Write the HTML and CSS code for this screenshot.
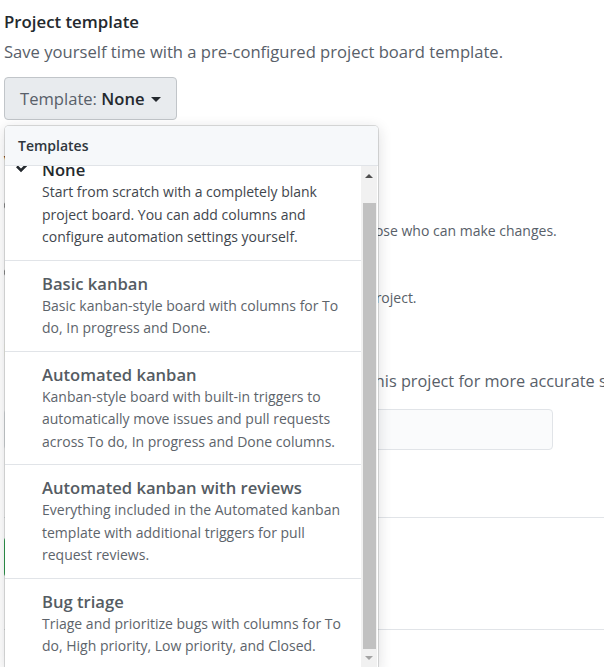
FILE: index.html
```html
<!DOCTYPE html>
<html lang="en">
<head>
<meta charset="utf-8">
<title>Project template</title>
<link rel="stylesheet" href="styles.css">
</head>
<body>
<div class="page">
  <section class="template">
    <h3 class="heading">Project template</h3>
    <p class="note">Save yourself time with a pre-configured project board template.</p>
    <div class="picker">
      <button class="btn" type="button"><span class="btn-label">Template:</span>&nbsp;<span class="btn-value">None</span><span class="caret"></span></button>
      <div class="menu">
        <div class="menu-header">Templates</div>
        <div class="menu-body">
          <div class="menu-list">
            <div class="menu-scroll">
              <div class="item selected">
                <span class="item-icon"><svg width="15" height="20" viewBox="0 0 12 16"><path d="M12 5l-8 8-4-4 1.5-1.5L4 10l6.5-6.5L12 5z"/></svg></span>
                <div class="item-text">
                  <div class="item-title">None</div>
                  <div class="item-desc">Start from scratch with a completely blank<br>project board. You can add columns and<br>configure automation settings yourself.</div>
                </div>
              </div>
              <div class="item">
                <span class="item-icon"></span>
                <div class="item-text">
                  <div class="item-title">Basic kanban</div>
                  <div class="item-desc">Basic kanban-style board with columns for To<br>do, In progress and Done.</div>
                </div>
              </div>
              <div class="item">
                <span class="item-icon"></span>
                <div class="item-text">
                  <div class="item-title">Automated kanban</div>
                  <div class="item-desc">Kanban-style board with built-in triggers to<br>automatically move issues and pull requests<br>across To do, In progress and Done columns.</div>
                </div>
              </div>
              <div class="item">
                <span class="item-icon"></span>
                <div class="item-text">
                  <div class="item-title">Automated kanban with reviews</div>
                  <div class="item-desc">Everything included in the Automated kanban<br>template with additional triggers for pull<br>request reviews.</div>
                </div>
              </div>
              <div class="item">
                <span class="item-icon"></span>
                <div class="item-text">
                  <div class="item-title">Bug triage</div>
                  <div class="item-desc">Triage and prioritize bugs with columns for To<br>do, High priority, Low priority, and Closed.</div>
                </div>
              </div>
            </div>
          </div>
          <div class="scrollbar">
            <div class="sb-btn"><span class="arrow-up"></span></div>
            <div class="sb-gap"></div>
            <div class="sb-thumb"></div>
            <div class="sb-btn sb-btn-end"><span class="arrow-down"></span></div>
          </div>
        </div>
      </div>
    </div>
  </section>

  <section class="visibility">
    <h3 class="sub-heading">Visibility</h3>
    <label class="radio-row"><span class="radio"></span><span class="radio-label">Public</span></label>
    <p class="radio-note public-note">Anyone on the internet can see this project. You choose who can make changes.</p>
    <label class="radio-row private-row"><span class="radio"></span><span class="radio-label">Private</span></label>
    <p class="radio-note private-note">You choose who can see and make changes to this project.</p>
  </section>

  <section class="linked">
    <h3 class="sub-heading linked-heading">Linked repositories</h3>
    <p class="linked-note">Search by name to link up to 25 repositories to this project for more accurate suggestions and better search results.</p>
    <div class="search-input"></div>
  </section>

  <hr class="rule">
  <div class="create-btn">Create project</div>
  <hr class="rule rule-last">
</div>
</body>
</html>
```

FILE: styles.css
```css
html, body {
  margin: 0;
  padding: 0;
  background: #ffffff;
  overflow: hidden;
}

body {
  width: 604px;
  height: 667px;
  font-family: "Open Sans", "Noto Sans", sans-serif;
  color: #24292e;
}

.page {
  padding-left: 4px;
}

.heading {
  margin: 0;
  padding-top: 10px;
  font-size: 16.8px;
  line-height: 24px;
  font-weight: 600;
  color: #24292e;
}

.note {
  margin: 4px 0 0;
  font-size: 16.6px;
  line-height: 28px;
  color: #586069;
  white-space: nowrap;
}

.picker {
  position: relative;
  margin-top: 11px;
}

.btn {
  display: inline-flex;
  align-items: center;
  height: 43px;
  box-sizing: border-box;
  padding: 0 15px;
  border: 1px solid #c1c5c9;
  border-radius: 4px;
  background: #e8ebee;
  font-family: inherit;
  font-size: 16.6px;
  line-height: 24px;
  color: #586069;
}

.btn-value {
  color: #24292e;
  font-weight: 600;
}

.caret {
  display: inline-block;
  width: 0;
  height: 0;
  margin-left: 6px;
  margin-top: 2px;
  border-top: 5px solid #24292e;
  border-left: 5px solid transparent;
  border-right: 5px solid transparent;
}

.menu {
  position: absolute;
  top: 48px;
  left: 0;
  z-index: 10;
  width: 375px;
  box-sizing: border-box;
  border: 1px solid rgba(27, 31, 35, 0.15);
  border-radius: 5px 5px 0 0;
  background: #ffffff;
  background-clip: padding-box;
  box-shadow: 0 3px 14px rgba(27, 31, 35, 0.14);
  overflow: hidden;
}

.menu-header {
  padding: 8px 13px;
  font-size: 14px;
  line-height: 23px;
  font-weight: 600;
  color: #2f363d;
  background: #f6f8fa;
  border-bottom: 1px solid #e1e4e8;
}

.menu-body {
  display: flex;
  height: 502px;
}

.menu-list {
  flex: 1;
  overflow: hidden;
}

.menu-scroll {
  margin-top: -19px;
}

.item {
  display: flex;
  padding: 11px 10px 11px 11px;
  border-bottom: 1px solid #e1e4e8;
}

.item:last-child {
  border-bottom: 0;
}

.item-icon {
  flex: 0 0 15px;
  width: 15px;
  margin-right: 11px;
}

.item-icon svg {
  display: block;
  margin-top: -2px;
  fill: #24292e;
}

.item-title {
  font-size: 16.6px;
  line-height: 23px;
  font-weight: 600;
  color: #555c63;
}

.item-desc {
  font-size: 14px;
  line-height: 22.5px;
  color: #5d646b;
  white-space: nowrap;
}

.item.selected .item-title {
  color: #24292e;
}

.item.selected .item-desc {
  color: #3f464d;
}

.scrollbar {
  flex: 0 0 16px;
  width: 16px;
  margin-right: 1px;
  background: #f1f1f1;
  display: flex;
  flex-direction: column;
}

.sb-btn {
  height: 20px;
  display: flex;
  align-items: center;
  justify-content: center;
}

.sb-btn-end {
  height: auto;
  flex: 1;
  padding-bottom: 2px;
}

.sb-gap {
  height: 17px;
}

.sb-thumb {
  height: 446px;
  margin: 0 1px 0 2px;
  background: #c1c1c1;
}

.arrow-up {
  width: 0;
  height: 0;
  border-bottom: 4px solid #505050;
  border-left: 4px solid transparent;
  border-right: 4px solid transparent;
}

.arrow-down {
  width: 0;
  height: 0;
  border-top: 4px solid #a3a3a3;
  border-left: 4px solid transparent;
  border-right: 4px solid transparent;
}

/* underlying page content (mostly covered by the menu) */
.sub-heading {
  margin: 30px 0 0;
  font-size: 16.8px;
  line-height: 24px;
  font-weight: 600;
}

.radio-row {
  display: flex;
  align-items: center;
  gap: 8px;
  margin-top: 19px;
  height: 24px;
  font-size: 16px;
  font-weight: 600;
}

.private-row {
  margin-top: 18px;
}

.radio {
  width: 13px;
  height: 13px;
  border: 1px solid #767676;
  border-radius: 50%;
  box-sizing: border-box;
}

.radio-note {
  margin: 3px 0 0;
  font-size: 14px;
  line-height: 22px;
  color: #586069;
  white-space: nowrap;
}

.public-note {
  padding-left: 31px;
}

.private-note {
  padding-left: 30px;
}

.linked-heading {
  margin-top: 29px;
}

.linked-note {
  margin: 6px 0 0;
  padding-left: 7px;
  font-size: 16.3px;
  line-height: 26px;
  color: #586069;
  white-space: nowrap;
}

.search-input {
  margin-top: 15px;
  width: 549px;
  height: 41px;
  box-sizing: border-box;
  border: 1px solid #e1e4e8;
  border-radius: 4px;
  background: #fafbfc;
}

.rule {
  margin: 67px 0 0;
  border: 0;
  border-top: 1px solid #e1e4e8;
  height: 0;
}

.create-btn {
  margin-top: 19px;
  width: 150px;
  height: 40px;
  border-radius: 4px;
  background: #2ea44f;
  color: #ffffff;
  font-size: 16px;
  line-height: 40px;
  text-align: center;
  font-weight: 600;
}

.rule-last {
  margin-top: 52px;
}
```
